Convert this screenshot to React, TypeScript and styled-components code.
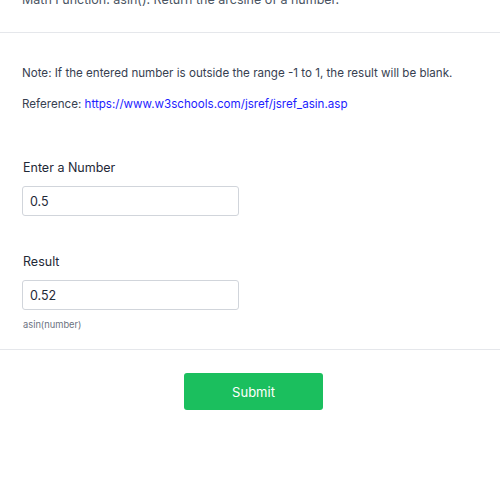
import * as React from 'react';
import styled, { createGlobalStyle } from 'styled-components';

const GlobalStyle = createGlobalStyle`
  html, body {
    margin: 0;
    padding: 0;
    background: #ffffff;
  }
  body {
    font-family: Inter, "Noto Sans", sans-serif;
    color: #1f2937;
    overflow: hidden;
  }
  * {
    box-sizing: border-box;
  }
`;

const Page = styled.div`
  width: 500px;
  overflow: hidden;
`;

const Header = styled.div`
  margin-top: -10px;
  padding: 0 22px 22px;
  border-bottom: 1px solid #e5e7eb;
  p {
    margin: 0;
    font-size: 12.5px;
    line-height: 20px;
    color: #4b5563;
  }
`;

const Notes = styled.div`
  padding: 31px 22px 0;
  p {
    margin: 0 0 13px;
    font-size: 11.6px;
    line-height: 18px;
    color: #374151;
  }
  p:last-child {
    margin-bottom: 0;
  }
  a {
    color: #1d1dff;
    text-decoration: none;
  }
`;

const Form = styled.div`
  padding: 46px 22px 0;
`;

const Field = styled.div<{ $gap?: number }>`
  display: flex;
  flex-direction: column;
  margin-bottom: ${(p) => p.$gap ?? 0}px;
`;

const Label = styled.label`
  font-size: 12.5px;
  line-height: 18px;
  color: #1f2937;
  padding-left: 1px;
  margin-bottom: 9px;
`;

const Input = styled.input`
  width: 217px;
  height: 30px;
  border: 1px solid #d1d5db;
  border-radius: 3px;
  padding: 0 7px;
  font-family: Inter, "Noto Sans", sans-serif;
  font-size: 12.5px;
  color: #1f2937;
  outline: none;
  background: #fff;
`;

const Hint = styled.div`
  margin-top: 8px;
  font-size: 9.3px;
  line-height: 14px;
  color: #6b7280;
  padding-left: 1px;
`;

const Footer = styled.div`
  margin-top: 17px;
  border-top: 1px solid #e5e7eb;
  display: flex;
  justify-content: center;
  padding-top: 23px;
  padding-left: 7px;
`;

const SubmitButton = styled.button`
  width: 139px;
  height: 37px;
  border: none;
  border-radius: 3px;
  background: #1bbf5e;
  color: #ffffff;
  font-family: Inter, "Noto Sans", sans-serif;
  font-size: 13px;
  cursor: pointer;
`;

export default function App() {
  const [value, setValue] = React.useState('0.5');
  const n = parseFloat(value);
  const result = !isNaN(n) && n >= -1 && n <= 1 ? Math.asin(n).toFixed(2) : '';

  return (
    <Page>
      <GlobalStyle />
      <Header>
        <p>Math Function: asin(). Return the arcsine of a number.</p>
      </Header>
      <Notes>
        <p>Note: If the entered number is outside the range -1 to 1, the result will be blank.</p>
        <p>
          Reference:{' '}
          <a href="#">https://www.w3schools.com/jsref/jsref_asin.asp</a>
        </p>
      </Notes>
      <Form>
        <Field $gap={37}>
          <Label>Enter a Number</Label>
          <Input value={value} onChange={(e) => setValue(e.target.value)} />
        </Field>
        <Field>
          <Label>Result</Label>
          <Input value={result} readOnly />
          <Hint>asin(number)</Hint>
        </Field>
      </Form>
      <Footer>
        <SubmitButton>Submit</SubmitButton>
      </Footer>
    </Page>
  );
}
